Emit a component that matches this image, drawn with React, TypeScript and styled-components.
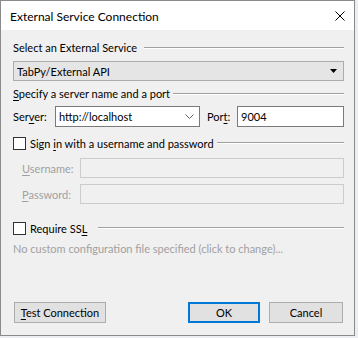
import React from 'react';
import styled, { createGlobalStyle } from 'styled-components';

const Global = createGlobalStyle`
  html, body { margin: 0; padding: 0; background: #eceef1; }
  body { font-family: Lato, "Segoe UI", sans-serif; font-size: 11px; color: #000; }
  #root { width: 358px; height: 338px; }
`;

const Window = styled.div`
  width: 355px;
  height: 336px;
  box-sizing: border-box;
  border: 1px solid #8a8a8a;
  background: #f0f0f0;
  display: flex;
  flex-direction: column;
`;

const TitleBar = styled.div`
  height: 29px;
  flex: none;
  background: #fff;
  display: flex;
  align-items: center;
  padding: 0 9px 0 9px;
`;

const Title = styled.div`
  flex: 1;
  font-size: 12px;
  padding-top: 1px;
`;

const Body = styled.div`
  flex: 1;
  display: flex;
  flex-direction: column;
  padding: 10px 10px 12px 12px;
`;

const Header = styled.div<{ $mt?: number }>`
  display: flex;
  align-items: center;
  height: 16px;
  line-height: 16px;
  margin-top: ${(p) => p.$mt ?? 0}px;
`;

const Rule = styled.div<{ $gap: number }>`
  flex: 1;
  height: 1px;
  background: #a0a0a0;
  box-shadow: 0 1px 0 #fff;
  margin-left: ${(p) => p.$gap}px;
  margin-top: -1px;
`;

const Key = styled.span`
  text-decoration: underline;
  text-underline-offset: 2px;
  text-decoration-thickness: 1px;
`;

const Select = styled.div`
  margin-top: 5px;
  height: 20px;
  box-sizing: border-box;
  border: 1px solid #adadad;
  background: #e5e5e5;
  display: flex;
  align-items: center;
  padding: 0 6px 0 3px;
`;

const Grow = styled.span`
  flex: 1;
  white-space: nowrap;
  overflow: hidden;
`;

const ServerRow = styled.div`
  margin-top: 4px;
  height: 21px;
  display: flex;
  align-items: center;
`;

const Label = styled.div<{ $w: number; $disabled?: boolean }>`
  width: ${(p) => p.$w}px;
  flex: none;
  color: ${(p) => (p.$disabled ? '#a0a0a0' : '#000')};
  white-space: nowrap;
`;

const TextBox = styled.div<{ $w?: number }>`
  height: 21px;
  box-sizing: border-box;
  border: 1px solid #7a7a7a;
  background: #fff;
  display: flex;
  align-items: center;
  padding: 0 5px 0 3px;
  ${(p) => (p.$w ? `width: ${p.$w}px; flex: none;` : 'flex: 1;')}
`;

const CheckRow = styled.div<{ $mt: number }>`
  margin-top: ${(p) => p.$mt}px;
  height: 16px;
  display: flex;
  align-items: center;
`;

const Box = styled.div`
  width: 13px;
  height: 13px;
  box-sizing: border-box;
  border: 1px solid #333;
  background: #fff;
  flex: none;
  margin-right: 4px;
`;

const FieldRow = styled.div<{ $mt: number }>`
  margin-top: ${(p) => p.$mt}px;
  padding-left: 9px;
  height: 20px;
  display: flex;
  align-items: center;
`;

const DisabledInput = styled.div`
  flex: 1;
  height: 20px;
  box-sizing: border-box;
  border: 1px solid #cccccc;
  background: #f0f0f0;
`;

const Info = styled.div`
  margin-top: 5px;
  height: 16px;
  line-height: 16px;
  color: #a0a0a0;
  white-space: nowrap;
`;

const Footer = styled.div`
  margin-top: auto;
  display: flex;
  align-items: center;
  padding: 0 1px;
`;

const Button = styled.button<{ $w: number; $default?: boolean }>`
  width: ${(p) => p.$w}px;
  height: 21px;
  box-sizing: border-box;
  font: inherit;
  color: #000;
  background: #e1e1e1;
  border: ${(p) => (p.$default ? '2px solid #0078d7' : '1px solid #adadad')};
  padding: 0;
  margin: 0;
`;

const Spacer = styled.div`
  flex: 1;
`;

const Gap = styled.div<{ $w: number }>`
  width: ${(p) => p.$w}px;
  flex: none;
`;

const CloseIcon = () => (
  <svg width="10" height="10" viewBox="0 0 10 10" style={{ display: 'block' }}>
    <path d="M0.5 0.5 L9.5 9.5 M9.5 0.5 L0.5 9.5" stroke="#000" strokeWidth="1" fill="none" />
  </svg>
);

const TriangleDown = () => (
  <svg width="7" height="4" viewBox="0 0 7 4" style={{ display: 'block' }}>
    <path d="M0 0 H7 L3.5 4 Z" fill="#000" />
  </svg>
);

const Chevron = () => (
  <svg width="9" height="5" viewBox="0 0 9 5" style={{ display: 'block' }}>
    <path d="M0.5 0.5 L4.5 4.5 L8.5 0.5" stroke="#606060" strokeWidth="1" fill="none" />
  </svg>
);

export default function App() {
  return (
    <>
      <Global />
      <Window>
        <TitleBar>
          <Title>External Service Connection</Title>
          <CloseIcon />
        </TitleBar>
        <Body>
          <Header>
            <span>Select an External Service</span>
            <Rule $gap={7} />
          </Header>
          <Select>
            <Grow>TabPy/External API</Grow>
            <TriangleDown />
          </Select>
          <Header $mt={5}>
            <span>
              <Key>S</Key>pecify a server name and a port
            </span>
            <Rule $gap={3} />
          </Header>
          <ServerRow>
            <Label $w={42}>
              Ser<Key>v</Key>er:
            </Label>
            <TextBox $w={145}>
              <Grow>http://localhost</Grow>
              <Chevron />
            </TextBox>
            <Gap $w={7} />
            <Label $w={30}>
              Por<Key>t</Key>:
            </Label>
            <TextBox>
              <Grow>9004</Grow>
            </TextBox>
          </ServerRow>
          <CheckRow $mt={8}>
            <Box />
            <span>
              Sign <Key>i</Key>n with a username and password
            </span>
            <Rule $gap={3} />
          </CheckRow>
          <FieldRow $mt={7}>
            <Label $w={58} $disabled>
              <Key>U</Key>sername:
            </Label>
            <DisabledInput />
          </FieldRow>
          <FieldRow $mt={6}>
            <Label $w={58} $disabled>
              <Key>P</Key>assword:
            </Label>
            <DisabledInput />
          </FieldRow>
          <CheckRow $mt={16}>
            <Box />
            <span>
              Require SS<Key>L</Key>
            </span>
            <Rule $gap={11} />
          </CheckRow>
          <Info>No custom configuration file specified (click to change)...</Info>
          <Footer>
            <Button $w={92}>
              <Key>T</Key>est Connection
            </Button>
            <Spacer />
            <Button $w={72} $default>
              OK
            </Button>
            <Gap $w={9} />
            <Button $w={74}>Cancel</Button>
          </Footer>
        </Body>
      </Window>
    </>
  );
}
